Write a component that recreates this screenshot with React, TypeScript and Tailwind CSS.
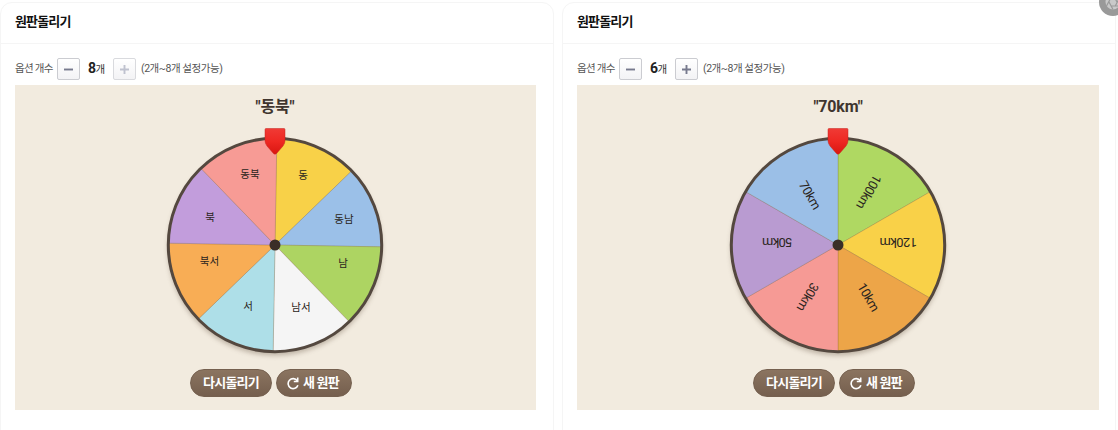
import React from 'react';

interface Slice {
  label: string;
  color: string;
  x: number;
  y: number;
  rotate?: number;
}

interface RouletteProps {
  count: number;
  result: string;
  slices: Slice[];
  offset: number; // start angle of the first slice, in degrees
  labelSize: number;
  canIncrease: boolean;
  className: string;
  boardClassName: string;
}

const R = 106.5;

const directionSlices: Slice[] = [
  { label: '동', color: '#f8d148', x: 28, y: -69.5 },
  { label: '동남', color: '#9bc0e8', x: 69, y: -25.5 },
  { label: '남', color: '#add462', x: 68, y: 18.5 },
  { label: '남서', color: '#f5f5f5', x: 26, y: 62.5 },
  { label: '서', color: '#aedfe8', x: -27, y: 61.5 },
  { label: '북서', color: '#f8ad55', x: -65.5, y: 16 },
  { label: '북', color: '#c29ddc', x: -65, y: -27.5 },
  { label: '동북', color: '#f79b95', x: -25, y: -70.5 },
];

const distanceSlices: Slice[] = [
  { label: '100km', color: '#afd862', x: 31, y: -53, rotate: 120 },
  { label: '120km', color: '#f9d148', x: 60.5, y: -2, rotate: 180 },
  { label: '10km', color: '#eda548', x: 30.5, y: 52, rotate: 60 },
  { label: '30km', color: '#f69a95', x: -30, y: 52, rotate: 120 },
  { label: '50km', color: '#b99bd1', x: -60.5, y: -2, rotate: 180 },
  { label: '70km', color: '#9bbfe7', x: -28, y: -50, rotate: 60 },
];

const pointAt = (deg: number) => {
  const rad = ((deg - 90) * Math.PI) / 180;
  return `${(R * Math.cos(rad)).toFixed(2)} ${(R * Math.sin(rad)).toFixed(2)}`;
};

const Wheel: React.FC<{ id: string; slices: Slice[]; offset: number; labelSize: number }> = ({
  id,
  slices,
  offset,
  labelSize,
}) => {
  const step = 360 / slices.length;

  return (
    <svg width="240" height="240" viewBox="-120 -120 240 240" className="block">
      <defs>
        <linearGradient id={`${id}-pin`} x1="0" y1="0" x2="0" y2="1">
          <stop offset="0" stopColor="#f03a35" />
          <stop offset="0.5" stopColor="#ee2822" />
          <stop offset="1" stopColor="#d91611" />
        </linearGradient>
        <filter id={`${id}-shadow`} x="-20%" y="-20%" width="140%" height="140%">
          <feGaussianBlur stdDeviation="2.5" />
        </filter>
      </defs>
      <circle cy="3.5" r="107" fill="#6b5a48" opacity="0.4" filter={`url(#${id}-shadow)`} />
      {slices.map((slice, i) => (
        <path
          key={slice.label}
          d={`M0 0L${pointAt(offset + i * step)}A${R} ${R} 0 0 1 ${pointAt(offset + (i + 1) * step)}Z`}
          fill={slice.color}
          stroke="#7a5a30"
          strokeOpacity="0.28"
          strokeWidth="0.8"
        />
      ))}
      <circle r="106.7" fill="none" stroke="#54483f" strokeWidth="3" />
      {slices.map((slice) => (
        <text
          key={slice.label}
          transform={`translate(${slice.x} ${slice.y}) rotate(${slice.rotate ?? 0})`}
          textAnchor="middle"
          dy="0.36em"
          fontSize={labelSize}
          letterSpacing={slice.rotate ? -0.5 : 0}
          fill="#2a2420"
        >
          {slice.label}
        </text>
      ))}
      <circle r="5.5" fill="#3a2e27" />
      {/* Pin */}
      <path
        d="M-9-116.500H9Q10-116.500 10-115.500V-104.500Q10-101.500 8-99L1.500-91.500Q0-90-1.500-91.500L-8-99Q-10-101.500-10-104.500V-115.500Q-10-116.500-9-116.500Z"
        fill={`url(#${id}-pin)`}
        stroke="#c5221c"
        strokeWidth="0.5"
      />
    </svg>
  );
};

const StepButton: React.FC<{ type: 'minus' | 'plus'; disabled?: boolean }> = ({ type, disabled }) => (
  <button
    className={`flex h-[22px] w-[23px] shrink-0 items-center justify-center rounded-[2px] border bg-gradient-to-b from-white to-[#f3f3f5] ${
      disabled ? 'border-[#d9dade] text-[#bfc2cf]' : 'border-[#cbccd1] text-[#777a8e]'
    }`}
  >
    <svg width="9" height="9" viewBox="0 0 9 9" stroke="currentColor" strokeWidth="1.9">
      <path d={type === 'plus' ? 'M0 4.500H9M4.500 0V9' : 'M0 4.500H9'} />
    </svg>
  </button>
);

const Roulette: React.FC<RouletteProps> = ({
  count,
  result,
  slices,
  offset,
  labelSize,
  canIncrease,
  className,
  boardClassName,
}) => (
  <section className={`flex h-[440px] shrink-0 flex-col rounded-t-[12px] border border-[#f5f5f5] bg-white ${className}`}>
    <h2 className="flex h-[41px] shrink-0 items-center border-b border-[#f5f5f5] pb-[2px] pl-[14px] text-[13px] font-bold tracking-[-0.85px] text-[#111]">
      원판돌리기
    </h2>
    <div className="pt-[14px] pl-[14px]">
      <div className="flex h-[22px] items-center text-[10.5px] tracking-[-0.45px] whitespace-nowrap text-[#555]">
        <span className="w-[42px] tracking-[-0.7px]">옵션 개수</span>
        <StepButton type="minus" />
        <span className="w-[33px] pb-[2px] pl-[8px] text-[#333]">
          <b className="text-[14px] font-bold text-[#222]">{count}</b>개
        </span>
        <StepButton type="plus" disabled={!canIncrease} />
        <span className="pl-[5px]">(2개~8개 설정가능)</span>
      </div>
      <div className={`flex flex-col items-center bg-[#f2ebdf] ${boardClassName}`}>
        <p className="mt-[11px] h-[22px] text-[16px] leading-[22px] font-bold tracking-[-0.2px] text-[#40352e]">
          "{result}"
        </p>
        <div className="mt-[7px] h-[240px]">
          <Wheel id={`wheel${count}`} slices={slices} offset={offset} labelSize={labelSize} />
        </div>
        <div className="mt-[4px] flex gap-[4px] pr-[8px] text-[13px] font-bold tracking-[-0.8px] text-white">
          <button className="flex h-[28px] w-[82px] items-center justify-center rounded-full border border-[#75604f] bg-gradient-to-b from-[#8b7460] to-[#755f4e]">
            다시돌리기
          </button>
          <button className="flex h-[28px] w-[76px] items-center justify-center gap-[3px] rounded-full border border-[#75604f] bg-gradient-to-b from-[#8b7460] to-[#755f4e] pr-[2px]">
            <svg width="13" height="13" viewBox="0 0 13 13" fill="none" stroke="#fff" strokeWidth="1.6">
              <path d="M10.200 3.700A5 5 0 1 0 10.900 8.200" />
              <path d="M6.800 4.500H10.700V0.600" />
            </svg>
            새 원판
          </button>
        </div>
      </div>
    </div>
  </section>
);

const App: React.FC = () => (
  <main className="relative flex h-[430px] w-[1118px] overflow-hidden bg-white pt-[2px] [font-family:Roboto,'Noto_Sans_CJK_KR',sans-serif]">
    <Roulette
      count={8}
      result="동북"
      slices={directionSlices}
      offset={1}
      labelSize={10.5}
      canIncrease={false}
      className="w-[554px]"
      boardClassName="mt-[5px] h-[325px] w-[521px] pr-[1px]"
    />
    <Roulette
      count={6}
      result="70km"
      slices={distanceSlices}
      offset={0}
      labelSize={12.8}
      canIncrease
      className="ml-[8px] w-[554px]"
      boardClassName="mt-[5px] h-[325px] w-[522px]"
    />
    {/* Floating capture badge */}
    <div className="absolute -top-[12px] left-[1099px] h-[28px] w-[28px]">
      <svg width="28" height="28" viewBox="0 0 28 28">
        <circle cx="14" cy="14" r="14" fill="#999" />
        <circle cx="14" cy="14" r="7.500" fill="#c9c9c9" />
        <g stroke="#999" strokeWidth="1.200">
          <path d="M14 6.500L18 14M20.500 10L16.500 17.500M20.500 18H12M14 21.500L10 14M7.500 18L11.500 10.500M7.500 10H16" />
        </g>
      </svg>
    </div>
  </main>
);

export default App;
